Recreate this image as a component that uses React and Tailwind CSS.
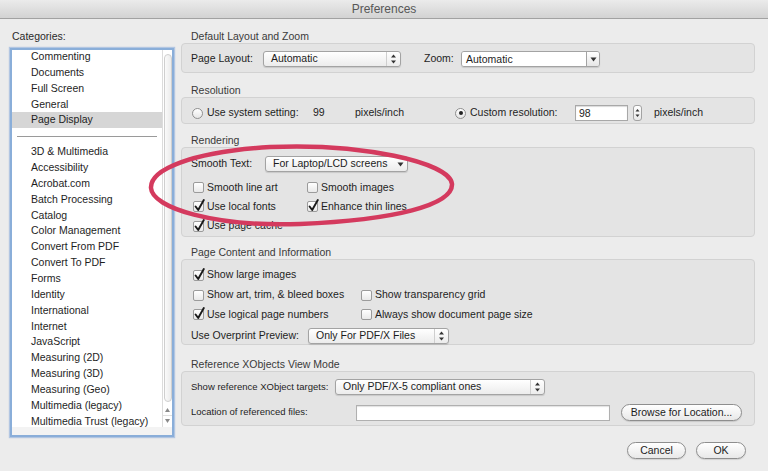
import React from "react";

const items1 = ["Commenting", "Documents", "Full Screen", "General", "Page Display"];
const items2 = [
  "3D & Multimedia", "Accessibility", "Acrobat.com", "Batch Processing", "Catalog",
  "Color Management", "Convert From PDF", "Convert To PDF", "Forms", "Identity",
  "International", "Internet", "JavaScript", "Measuring (2D)", "Measuring (3D)",
  "Measuring (Geo)", "Multimedia (legacy)", "Multimedia Trust (legacy)",
];

function UpDown() {
  return (
    <svg width="7" height="10" viewBox="0 0 7 10">
      <path d="M3.5 0.5 L6 3.5 L1 3.5 Z" fill="#333" />
      <path d="M3.5 9.5 L6 6.5 L1 6.5 Z" fill="#333" />
    </svg>
  );
}

function Down() {
  return (
    <svg width="7" height="5" viewBox="0 0 7 5">
      <path d="M0.5 0.5 L6.5 0.5 L3.5 4.5 Z" fill="#333" />
    </svg>
  );
}

function Popup({ className, text, single }) {
  return (
    <div className={"h-[16px] flex items-center rounded-[3px] border border-[#a3a3a3] bg-gradient-to-b from-white to-[#ececec] shadow-[0_1px_1px_rgba(0,0,0,0.12)] " + className}>
      <div className="flex-1 pl-[7px] text-[#1c1c1c] whitespace-nowrap overflow-hidden">{text}</div>
      {single ? (
        <div className="w-[14px] h-full flex items-center justify-center"><Down /></div>
      ) : (
        <div className="w-[14px] h-full flex items-center justify-center border-l border-[#cfcfcf]"><UpDown /></div>
      )}
    </div>
  );
}

function Check({ checked, label, className = "" }) {
  return (
    <div className={"flex items-center " + className}>
      <div className="relative w-[11px] h-[11px] rounded-[2px] border border-[#9b9b9b] bg-gradient-to-b from-white to-[#e9e9e9] shrink-0">
        {checked && (
          <svg className="absolute left-[0px] top-[-3px]" width="11" height="13" viewBox="0 0 11 13">
            <path d="M1.6 7.5 L4.2 11 L9.8 1" fill="none" stroke="#1a1a1a" strokeWidth="1.9" strokeLinecap="round" strokeLinejoin="round" />
          </svg>
        )}
      </div>
      <span className="ml-[3px] whitespace-nowrap">{label}</span>
    </div>
  );
}

function Radio({ on }) {
  return (
    <div className="w-[11px] h-[11px] rounded-full border border-[#8f8f8f] bg-gradient-to-b from-white to-[#e6e6e6] flex items-center justify-center shrink-0">
      {on && <div className="w-[4px] h-[4px] rounded-full bg-[#222]" />}
    </div>
  );
}

function Label({ children, className = "" }) {
  return <div className={"pl-[10px] h-[14px] leading-[14px] text-[#3a3a3a] whitespace-nowrap " + className}>{children}</div>;
}

function Box({ children, className = "" }) {
  return (
    <div className={"rounded-[4px] border border-[#d2d2d2] bg-[#e4e4e4] " + className}>{children}</div>
  );
}

function Button({ children, className = "" }) {
  return (
    <div className={"h-[17px] rounded-full border border-[#8e8e8e] bg-gradient-to-b from-white to-[#e8e8e8] shadow-[0_1px_1px_rgba(0,0,0,0.12)] flex items-center justify-center text-[#1c1c1c] whitespace-nowrap " + className}>
      {children}
    </div>
  );
}

export default function App() {
  return (
    <div className="relative w-[768px] h-[471px] overflow-hidden bg-[#ececec] font-['Liberation_Sans',Arial,sans-serif] text-[10.5px] text-[#1e1e1e]">
      {/* title bar */}
      <div className="h-[19px] bg-gradient-to-b from-[#ebebeb] to-[#d3d3d3] border-b border-[#a2a2a2] flex items-center justify-center">
        <span className="text-[12px] text-[#575757]">Preferences</span>
      </div>

      <div className="flex">
        {/* left column */}
        <div className="ml-[10px] w-[164px]">
          <div className="mt-[10px] pl-[2px] h-[14px] leading-[14px] text-[#2a2a2a]">Categories:</div>
          <div className="mt-[5px] h-[389px] border-2 border-[#8aaed9] shadow-[0_0_1px_1px_rgba(120,160,215,0.5)] bg-[#f3f3f3] flex flex-col">
            <div className="h-[377px] flex bg-white overflow-hidden">
              <div className="flex-1 -mt-[1px]">
                {items1.map((t) => (
                  <div key={t} className={"h-[15.86px] leading-[15.86px] pl-[19px] whitespace-nowrap " + (t === "Page Display" ? "bg-[#d6d6d6]" : "")}>{t}</div>
                ))}
                <div className="h-[15.86px] flex items-center px-[5px]">
                  <div className="w-full h-[1px] bg-[#9a9a9a]" />
                </div>
                {items2.map((t) => (
                  <div key={t} className="h-[15.86px] leading-[15.86px] pl-[19px] whitespace-nowrap">{t}</div>
                ))}
              </div>
              {/* scrollbar */}
              <div className="w-[10px] border-l border-[#dcdcdc] bg-white flex flex-col items-center">
                <div className="mt-[4px] w-[8px] h-[348px] rounded-full border border-[#cfcfcf] bg-gradient-to-r from-[#fafafa] to-[#ebebeb]" />
                <div className="mt-[4px] w-full flex-1 flex flex-col items-center justify-start gap-[3px] pt-[2px]">
                  <svg width="5" height="4" viewBox="0 0 5 4"><path d="M2.5 0 L5 4 L0 4 Z" fill="#8a8a8a" /></svg>
                  <div className="w-full h-[1px] bg-[#e0e0e0]" />
                  <svg width="5" height="4" viewBox="0 0 5 4"><path d="M0 0 L5 0 L2.5 4 Z" fill="#8a8a8a" /></svg>
                </div>
              </div>
            </div>
          </div>
        </div>

        {/* right column */}
        <div className="ml-[7px] w-[574px] flex flex-col">
          <Label className="mt-[10px]">Default Layout and Zoom</Label>
          <Box className="h-[30px] flex items-center pl-[9px] pt-[2px]">
            <div className="w-[72px]">Page Layout:</div>
            <Popup className="w-[138px]" text="Automatic" />
            <div className="ml-[23px] w-[37px]">Zoom:</div>
            <div className="w-[139px] h-[16px] flex border border-[#a3a3a3] rounded-[3px] shadow-[0_1px_1px_rgba(0,0,0,0.12)] overflow-hidden">
              <div className="flex-1 bg-white pl-[4px] leading-[14px]">Automatic</div>
              <div className="w-[13px] border-l border-[#a3a3a3] bg-gradient-to-b from-white to-[#e6e6e6] flex items-center justify-center"><Down /></div>
            </div>
          </Box>

          <Label className="mt-[10px]">Resolution</Label>
          <Box className="h-[27px] flex items-center pl-[10px] pt-[5px]">
            <Radio />
            <div className="ml-[4px] w-[106px]">Use system setting:</div>
            <div className="w-[42px]">99</div>
            <div className="w-[100px]">pixels/inch</div>
            <Radio on />
            <div className="ml-[4px] w-[105px]">Custom resolution:</div>
            <div className="w-[53px] h-[16px] bg-white border border-[#a8a8a8] shadow-[inset_0_1px_1px_rgba(0,0,0,0.15)] pl-[3px] leading-[14px]">98</div>
            <div className="ml-[5px] w-[9px] h-[16px] rounded-[3px] border border-[#a3a3a3] bg-gradient-to-b from-white to-[#e8e8e8] flex items-center justify-center">
              <svg width="5" height="10" viewBox="0 0 5 10">
                <path d="M2.5 1 L4.5 3.5 L0.5 3.5 Z" fill="#333" />
                <path d="M2.5 9 L4.5 6.5 L0.5 6.5 Z" fill="#333" />
              </svg>
            </div>
            <div className="ml-[12px]">pixels/inch</div>
          </Box>

          <Label className="mt-[9px]">Rendering</Label>
          <Box className="h-[90px] flex flex-col">
            <div className="mt-[8px] h-[16px] flex items-center pl-[9px]">
              <div className="w-[74px]">Smooth Text:</div>
              <Popup className="w-[143px]" text="For Laptop/LCD screens" single />
            </div>
            <div className="mt-[6px] h-[20px] flex items-center pl-[11px]">
              <Check label="Smooth line art" className="w-[114px]" />
              <Check label="Smooth images" />
            </div>
            <div className="h-[19px] flex items-center pl-[11px]">
              <Check checked label="Use local fonts" className="w-[114px]" />
              <Check checked label="Enhance thin lines" />
            </div>
            <div className="h-[20px] flex items-center pl-[11px]">
              <Check checked label="Use page cache" />
            </div>
          </Box>

          <Label className="mt-[8px]">Page Content and Information</Label>
          <Box className="h-[86px] flex flex-col">
            <div className="mt-[5px] h-[20px] flex items-center pl-[11px]">
              <Check checked label="Show large images" />
            </div>
            <div className="h-[20px] flex items-center pl-[11px]">
              <Check label="Show art, trim, & bleed boxes" className="w-[168px]" />
              <Check label="Show transparency grid" />
            </div>
            <div className="h-[19px] flex items-center pl-[11px]">
              <Check checked label="Use logical page numbers" className="w-[168px]" />
              <Check label="Always show document page size" />
            </div>
            <div className="mt-[4px] h-[16px] flex items-center pl-[9px]">
              <div className="w-[117px] whitespace-nowrap">Use Overprint Preview:</div>
              <Popup className="w-[141px]" text="Only For PDF/X Files" />
            </div>
          </Box>

          <Label className="mt-[12px]">Reference XObjects View Mode</Label>
          <Box className="h-[55px] flex flex-col">
            <div className="mt-[7px] h-[16px] flex items-center pl-[9px]">
              <div className="w-[144px] whitespace-nowrap text-[9.5px]">Show reference XObject targets:</div>
              <Popup className="w-[210px]" text="Only PDF/X-5 compliant ones" />
            </div>
            <div className="mt-[9px] h-[17px] flex items-center pl-[9px]">
              <div className="w-[165px] whitespace-nowrap text-[9.5px]">Location of referenced files:</div>
              <div className="w-[254px] h-[16px] bg-white border border-[#b0b0b0] shadow-[inset_0_1px_1px_rgba(0,0,0,0.12)]" />
              <Button className="ml-[11px] w-[121px]">Browse for Location...</Button>
            </div>
          </Box>

          <div className="mt-[16px] flex justify-end pr-[9px]">
            <Button className="w-[59px]">Cancel</Button>
            <Button className="ml-[10px] w-[50px]">OK</Button>
          </div>
        </div>
      </div>

      {/* red annotation ellipse */}
      <svg className="absolute left-0 top-0 pointer-events-none" width="768" height="471" viewBox="0 0 768 471">
        <path
          d="M151 188 C 150 170, 190 152, 270 147 C 360 143, 450 162, 452 184 C 453 205, 395 220, 300 224 C 215 227, 152 208, 151 188 Z"
          fill="none"
          stroke="#d43a5e"
          strokeWidth="4.5"
        />
      </svg>
    </div>
  );
}
